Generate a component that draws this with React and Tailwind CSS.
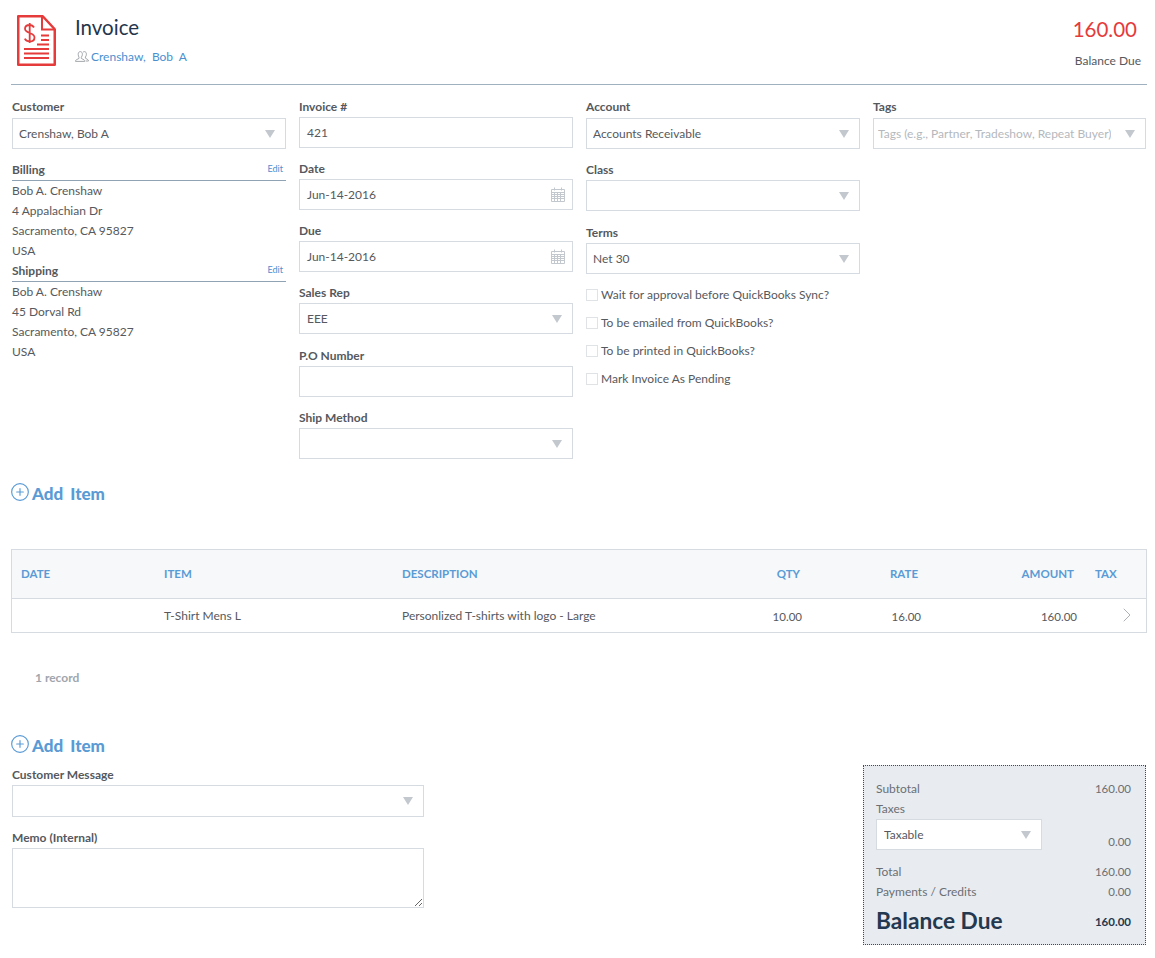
import React from 'react';
import { ChevronRight, CirclePlus } from 'lucide-react';

const Caret = () => (
  <svg width="10" height="8" viewBox="0 0 10 8" className="shrink-0">
    <polygon points="0,0 10,0 5,8" fill="#c3c8cf" />
  </svg>
);

const CalendarIcon = () => (
  <svg width="14" height="15" viewBox="0 0 14 15" className="shrink-0" fill="none" stroke="#c3c8cf" strokeWidth="1">
    <path d="M.5 2.500h13v12H.5z" />
    <path d="M.5 5.500h13M.5 7.500h13M.5 9.500h13M.5 11.500h13M3.500 5.500v9M6.500 5.500v9M9.500 5.500v9" />
    <path d="M3.500 .5v3M10.500 .5v3" />
  </svg>
);

const PeopleIcon = () => (
  <svg width="14" height="12" viewBox="0 0 14 12" className="shrink-0" fill="none" stroke="#9a9ea3" strokeWidth="0.9">
    <path d="M3.200 3.300C3.200 1.700 4 .6 5.300 .6s2.100 1.100 2.100 2.700c0 1.200-.5 2.300-1.100 2.900v1.200l2.800 1.500c.5.300.7.700.7 1.500H.5c0-.8.200-1.200.7-1.500L4 7.400V6.200c-.4-.6-.8-1.700-.8-2.900z" />
    <path d="M8 1.300c.3-.4.800-.7 1.400-.7 1.300 0 2 1.100 2 2.600 0 1.200-.4 2.200-1 2.800v1.200l2.400 1.400c.5.300.7.700.7 1.400h-2.700" />
  </svg>
);

const InvoiceIcon = () => (
  <svg width="39" height="51" viewBox="0 0 39 51" fill="none" stroke="#e53b3b" className="shrink-0">
    <path d="M1.250 1.250h24.500l12 13v35.500h-36.500z" strokeWidth="2.500" strokeLinejoin="round" />
    <path d="M25 2v12.500h12" strokeWidth="2" />
    <path d="M17 12.500c-1-1.800-2.800-2.500-4.500-2.500-2.800 0-4.500 1.700-4.500 3.800 0 5.200 9.500 3.200 9.500 8.700 0 2.400-2 4-4.800 4-2.200 0-4-.9-4.900-2.800M12.700 8v20" strokeWidth="1.800" />
    <path d="M24 20.500h8M24 25h8M20 29.500h12M7 34h25M7 38.500h25M7 43h25" strokeWidth="1.800" />
  </svg>
);

const Label = ({ children, className = '' }) => (
  <div className={`text-[12px] leading-[14px] font-bold text-[#55595d] ${className}`}>{children}</div>
);

const Select = ({ value, placeholder, className = 'h-[31px] pl-[6px]' }) => (
  <div className={`flex items-center justify-between border border-[#d5dbe0] bg-white pr-[10px] ${className}`}>
    <span className={`overflow-hidden whitespace-nowrap text-[12px] ${placeholder ? 'text-[#b4b8bd]' : 'text-[#56595d]'}`}>{value || placeholder}</span>
    <Caret />
  </div>
);

// labels in the top grid sit 1px higher than their box
const Field = ({ label, children, className = '', gap = 'mt-[3px]', labelClass = '-mt-[1px] pb-[1px]' }) => (
  <div className={className}>
    <Label className={labelClass}>{label}</Label>
    <div className={gap}>{children}</div>
  </div>
);

const Input = ({ value, icon }) => (
  <div className="flex h-[31px] items-center justify-between border border-[#d5dbe0] bg-white pl-[7px] pr-[7px] text-[12px] text-[#56595d]">
    <span>{value}</span>
    {icon && <CalendarIcon />}
  </div>
);

const Address = ({ title, lines, edit }) => (
  <div>
    <div className="flex h-[21px] items-center justify-between border-b border-[#8fa3b5]">
      <Label>{title}</Label>
      <span className="mb-[3px] pr-[3px] text-[9px] text-[#4a90d0]">{edit}</span>
    </div>
    {lines.map((l, i) => (
      <div key={i} className="h-5 text-[12px] leading-5 text-[#56595d]">{l}</div>
    ))}
  </div>
);

const Check = ({ label }) => (
  <div className="flex h-[28px] items-center gap-[3px] text-[12px] text-[#56595d]">
    <span className="h-3 w-3 border border-[#dfe3e6] bg-white" />
    <span>{label}</span>
  </div>
);

const AddItem = () => (
  <div className="flex h-5 items-center gap-[2px] text-[#5a9bd5]">
    <CirclePlus size={20} strokeWidth={1.4} className="-mt-[4px] -ml-[1px]" />
    <span className="text-[17px] leading-5 font-black [word-spacing:3px]">Add Item</span>
  </div>
);

const SummaryRow = ({ label, value, className = '' }) => (
  <div className={`flex justify-between text-[12px] leading-5 text-[#6b6f74] ${className}`}>
    <span>{label}</span>
    <span className="text-[11.5px]">{value}</span>
  </div>
);

export default function App() {
  return (
    <div className="min-h-[958px] bg-white pl-[11px] pr-[8px] font-['Lato',sans-serif]">
      <header className="flex h-[85px] border-b border-[#9fb0bf]">
        <div className="pl-[6px] pt-[15px]"><InvoiceIcon /></div>
        <div className="ml-[19px] pt-[14px]">
          <h1 className="text-[20.5px] leading-[27px] text-[#23364d]">Invoice</h1>
          <div className="mt-[8px] flex items-center gap-[2px] text-[12px] leading-4 text-[#4a90d0]">
            <PeopleIcon />
            <span className="[word-spacing:3px]">Crenshaw, Bob A</span>
          </div>
        </div>
        <div className="ml-auto pr-[6px] pt-[16px] text-right">
          <div className="pr-[4px] text-[20.5px] leading-[27px] text-[#e53b3b]">160.00</div>
          <div className="mt-[10px] text-[12px] leading-4 text-[#56595d]">Balance Due</div>
        </div>
      </header>

      <div className="grid grid-cols-[274px_274px_274px_273px] gap-x-[13px] pl-[1px] pt-[16px]">
        <div>
          <Field label="Customer"><Select value="Crenshaw, Bob A" /></Field>
          <div className="mt-[11px]">
            <Address title="Billing" edit="Edit" lines={['Bob A. Crenshaw', '4 Appalachian Dr', 'Sacramento, CA 95827', 'USA']} />
          </div>
          <Address title="Shipping" edit="Edit" lines={['Bob A. Crenshaw', '45 Dorval Rd', 'Sacramento, CA 95827', 'USA']} />
        </div>
        <div className="flex flex-col gap-[15px]">
          <Field gap="mt-[2px]" label="Invoice #"><Input value="421" /></Field>
          <Field gap="mt-[2px]" label="Date"><Input value="Jun-14-2016" icon /></Field>
          <Field gap="mt-[2px]" label="Due"><Input value="Jun-14-2016" icon /></Field>
          <Field gap="mt-[2px]" label="Sales Rep"><Select value="EEE" className="h-[31px] pl-[7px]" /></Field>
          <Field gap="mt-[2px]" label="P.O Number" className="mt-[1px]"><Input /></Field>
          <Field gap="mt-[2px]" label="Ship Method"><Select className="h-[31px] pl-[7px]" /></Field>
        </div>
        <div>
          <div className="flex flex-col gap-[15px]">
            <Field label="Account"><Select value="Accounts Receivable" /></Field>
            <Field label="Class" labelClass="" className="-mt-[1px]"><Select /></Field>
            <Field label="Terms" labelClass=""><Select value="Net 30" /></Field>
          </div>
          <div className="mt-[7px]">
            <Check label="Wait for approval before QuickBooks Sync?" />
            <Check label="To be emailed from QuickBooks?" />
            <Check label="To be printed in QuickBooks?" />
            <Check label="Mark Invoice As Pending" />
          </div>
        </div>
        <div>
          <Field label="Tags"><Select placeholder="Tags (e.g., Partner, Tradeshow, Repeat Buyer)" className="h-[31px] pl-[4px]" /></Field>
        </div>
      </div>

      <div className="pt-[25px]"><AddItem /></div>

      <div className="mt-[45px] w-[1136px] border border-[#d5dbe0]">
        <table className="w-full table-fixed border-collapse text-[12px]">
          <colgroup>
            <col className="w-[143px]" />
            <col className="w-[238px]" />
            <col />
            <col className="w-[90px]" />
            <col className="w-[118px]" />
            <col className="w-[156px]" />
            <col className="w-[62px]" />
          </colgroup>
          <thead>
            <tr className="h-[48px] border-b border-[#d5dbe0] bg-[#f6f8fa] text-[11.5px] font-bold text-[#5a9bd5]">
              <th className="pl-[9px] text-left font-bold">DATE</th>
              <th className="pl-[9px] text-left font-bold">ITEM</th>
              <th className="pl-[9px] text-left font-bold">DESCRIPTION</th>
              <th className="pr-[10px] text-right font-bold">QTY</th>
              <th className="pr-[10px] text-right font-bold">RATE</th>
              <th className="pr-[10px] text-right font-bold">AMOUNT</th>
              <th className="pl-[11px] text-left font-bold">TAX</th>
            </tr>
          </thead>
          <tbody>
            <tr className="h-[34px] text-[#56595d]">
              <td />
              <td className="pl-[9px] pt-[2px]">T-Shirt Mens L</td>
              <td className="pl-[9px] pt-[2px]">Personlized T-shirts with logo - Large</td>
              <td className="pr-[8px] pt-[2px] text-right text-[11.5px]">10.00</td>
              <td className="pr-[7px] pt-[2px] text-right text-[11.5px]">16.00</td>
              <td className="pr-[7px] pt-[2px] text-right text-[11.5px]">160.00</td>
              <td className="pr-[7px]">
                <div className="flex justify-end"><ChevronRight size={24} strokeWidth={0.7} className="text-[#8b9096]" /></div>
              </td>
            </tr>
          </tbody>
        </table>
      </div>

      <div className="pl-[24px] pt-[37px] text-[12px] leading-[16px] font-bold text-[#9fa6ad]">1 record</div>

      <div className="flex items-start justify-between pr-[1px] pt-[50px]">
        <div className="w-[413px] pl-[1px]">
          <div className="-ml-[1px] mb-[12px]"><AddItem /></div>
          <Field label="Customer Message" labelClass=""><Select className="h-[32px] pl-[6px]" /></Field>
          <Field label="Memo (Internal)" labelClass="" className="mt-[14px]">
            <textarea readOnly className="block h-[60px] w-full border border-[#d5dbe0] bg-white" />
          </Field>
        </div>
        <aside className="mt-[29px] h-[180px] w-[283px] border border-dotted border-[#3f4a55] bg-[#e8ebf0] pl-[12px] pr-[14px] pt-[13px]">
          <SummaryRow label="Subtotal" value="160.00" />
          <div className="text-[12px] leading-5 text-[#6b6f74]">Taxes</div>
          <div className="flex items-end justify-between">
            <div className="w-[166px]"><Select value="Taxable" className="h-[31px] pl-[7px]" /></div>
            <span className="text-[11.5px] leading-4 text-[#6b6f74]">0.00</span>
          </div>
          <SummaryRow label="Total" value="160.00" className="mt-[12px]" />
          <SummaryRow label="Payments / Credits" value="0.00" />
          <div className="mt-[4px] flex items-center justify-between">
            <span className="text-[22.7px] leading-[30px] font-bold text-[#24384f]">Balance Due</span>
            <span className="mt-[2px] text-[11.5px] font-bold text-[#24384f]">160.00</span>
          </div>
        </aside>
      </div>
    </div>
  );
}
